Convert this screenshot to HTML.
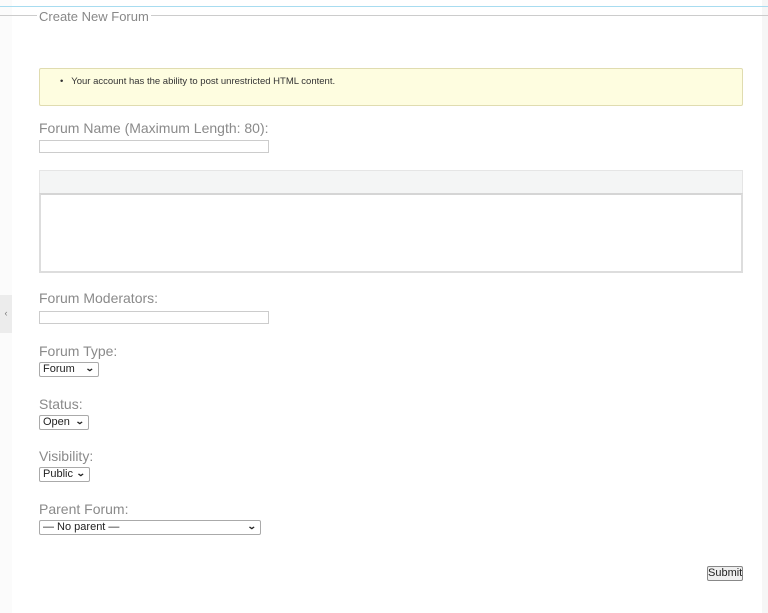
<!DOCTYPE html>
<html><head><meta charset="utf-8"><style>
body{margin:0;width:768px;height:613px;background:#fff;font-family:"Liberation Sans",sans-serif;position:relative;overflow:hidden}
.a{position:absolute}
.lbl{position:absolute;left:39px;font-size:14px;color:#8a8a8a}
.inp{position:absolute;left:39px;width:228px;height:11px;border:1px solid #ccc;background:#fff}
.sel{position:absolute;left:39px;border:1px solid #aaa;background:#fff;font-size:11px;color:#222;height:13px;line-height:13px;padding-left:3px;box-sizing:content-box;border-radius:2px}
.sel i{position:absolute;right:4px;top:-1px;font-style:normal;font-size:9px;font-weight:bold;transform:scaleX(1.3)}
</style></head><body>
<div class="a" style="left:0;top:0;width:12px;height:613px;background:#fbfbfb"></div>
<div class="a" style="right:0;top:0;width:6px;height:613px;background:#f6f6f6"></div>
<div class="a" style="left:0;top:6px;width:768px;height:1px;background:#a8dcf0"></div>
<div class="a" style="left:0;top:15px;width:768px;height:1px;background:#ccc"></div>
<div class="a" style="left:37px;top:9px;padding:0 2px;background:#fff;font-size:13px;color:#888">Create New Forum</div>
<div class="a" style="left:39px;top:68px;width:702px;height:36px;background:#fefde0;border:1px solid #e0dcb0;border-radius:2px"></div>
<div class="a" style="left:60px;top:76px;font-size:9.5px;color:#333">•&nbsp;&nbsp;&nbsp;Your account has the ability to post unrestricted HTML content.</div>
<div class="lbl" style="top:120px">Forum Name (Maximum Length: 80):</div>
<div class="inp" style="top:140px"></div>
<div class="a" style="left:39px;top:170px;width:702px;height:23px;background:#f4f5f5;border:1px solid #e5e5e5;border-bottom:none"></div>
<div class="a" style="left:39px;top:193px;width:700px;height:76px;border:2px solid #ddd;border-top:2px solid #d5d5d5;background:#fff"></div>
<div class="a" style="left:0;top:295px;width:12px;height:38px;background:#ececec;font-size:9px;color:#777;line-height:36px;text-align:center">‹</div>
<div class="lbl" style="top:290px">Forum Moderators:</div>
<div class="inp" style="top:311px"></div>
<div class="lbl" style="top:343px">Forum Type:</div>
<div class="sel" style="top:362px;width:55px">Forum<i>⌄</i></div>
<div class="lbl" style="top:396px">Status:</div>
<div class="sel" style="top:415px;width:45px">Open<i>⌄</i></div>
<div class="lbl" style="top:448px">Visibility:</div>
<div class="sel" style="top:467px;width:46px">Public<i>⌄</i></div>
<div class="lbl" style="top:501px">Parent Forum:</div>
<div class="sel" style="top:520px;width:217px">— No parent —<i>⌄</i></div>
<div class="a" style="left:707px;top:566px;width:34px;height:13px;border:1px solid #888;border-radius:2px;background:#efefef;font-size:11px;line-height:13px;text-align:center;color:#222">Submit</div>
</body></html>
